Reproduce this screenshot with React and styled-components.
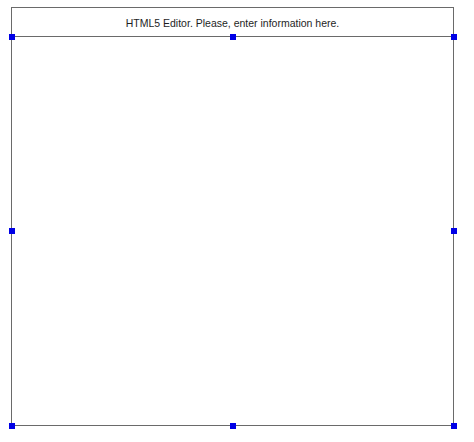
import React from 'react';
import styled, { createGlobalStyle } from 'styled-components';

const GlobalStyle = createGlobalStyle`
  html, body {
    margin: 0;
    background: #ffffff;
    font-family: "Liberation Sans", Arial, sans-serif;
  }
`;

const Page = styled.div`
  width: 474px;
  height: 442px;
  box-sizing: border-box;
  padding: 7px 0 0 11px;
`;

const Frame = styled.div`
  width: 443px;
  display: flex;
  flex-direction: column;
`;

const Header = styled.div`
  height: 29px;
  box-sizing: border-box;
  border: 1px solid #6a6a6a;
  border-bottom: none;
  display: flex;
  align-items: center;
  justify-content: center;
  padding-top: 1px;
  font-size: 10.5px;
  color: #1e1e1e;
`;

const EditorArea = styled.div`
  position: relative;
  height: 390px;
  box-sizing: border-box;
  border: 1px solid #6a6a6a;
`;

const Handle = styled.span`
  position: absolute;
  width: 6px;
  height: 6px;
  background: #0000e6;
  left: ${(p) => p.$x};
  top: ${(p) => p.$y};
  transform: translate(-50%, -50%);
`;

const handles = [
  ['-0.5px', '-0.5px'],
  ['50%', '-0.5px'],
  ['calc(100% + 0.5px)', '-0.5px'],
  ['-0.5px', '50%'],
  ['calc(100% + 0.5px)', '50%'],
  ['-0.5px', 'calc(100% + 0.5px)'],
  ['50%', 'calc(100% + 0.5px)'],
  ['calc(100% + 0.5px)', 'calc(100% + 0.5px)'],
];

export default function App() {
  return (
    <>
      <GlobalStyle />
      <Page>
        <Frame>
          <Header>HTML5 Editor. Please, enter information here.</Header>
          <EditorArea>
            {handles.map(([x, y], i) => (
              <Handle key={i} $x={x} $y={y} />
            ))}
          </EditorArea>
        </Frame>
      </Page>
    </>
  );
}
